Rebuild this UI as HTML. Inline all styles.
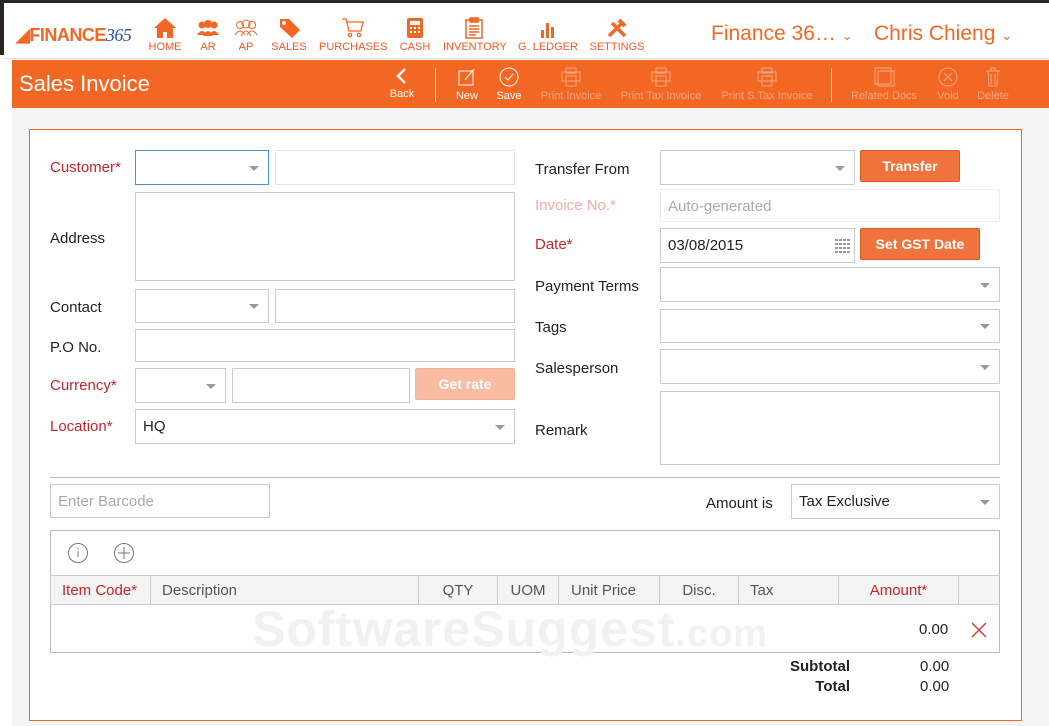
<!DOCTYPE html>
<html><head><meta charset="utf-8"><style>
*{box-sizing:border-box;margin:0;padding:0}
body{width:1049px;height:726px;overflow:hidden;position:relative;background:#fff;font-family:"Liberation Sans",Arial,sans-serif;font-size:15px;color:#222}
.a{position:absolute}
.top{left:0;top:0;width:1049px;height:3px;background:#2b2622}
.lstrip{left:0;top:0;width:4px;height:55px;background:#2b2622}
.hdr{left:4px;top:3px;width:1045px;height:56px;background:#fff;border-bottom:1px solid #ddd}
.nav{top:17px;text-align:center;color:#f05a28;font-size:11px}
.nav svg{display:block;margin:0 auto 2px}
.bar{left:12px;top:60px;width:1037px;height:48px;background:#f26724}
.bar .t{left:7px;top:11px;color:#fff;font-size:22px}
.tb{top:7px;color:#fff;font-size:11px;text-align:center}
.tb.d{color:#f9a882}
.tb svg{display:block;margin:0 auto 3px}
.vl{top:8px;width:1px;height:34px;background:#fff;opacity:.8}
.bg{left:12px;top:108px;width:1037px;height:618px;background:#f4f4f4}
.card{left:29px;top:129px;width:993px;height:592px;background:#fff;border:1px solid #f26724}
.lb{font-size:15px}
.r{color:#c0272d}
.in{border:1px solid #ccc;background:#fff}
.sel:after{content:"";position:absolute;right:9px;top:50%;margin-top:-2px;border-left:5px solid transparent;border-right:5px solid transparent;border-top:5px solid #999}
.btn{background:#f0733e;border:1px solid #d9582a;border-radius:2px;color:#fff;font-weight:bold;font-size:14px;text-align:center;line-height:30px}
.tx{padding-left:7px;line-height:33px}
.th{top:575px;height:30px;background:#f4f4f4;border-top:1px solid #ccc;border-bottom:1px solid #ccc;border-left:1px solid #ccc;font-size:15px;line-height:29px;color:#555}
.th.r{color:#c0272d}
</style></head><body>
<div class="a top"></div><div class="a lstrip"></div>
<div class="a hdr"></div>
<div class="a" style="left:16px;top:25px;font-size:18px;font-weight:bold;color:#f26724;letter-spacing:-.5px">◢FINANCE<span style="color:#2a4ea0;font-style:italic;font-weight:normal;font-family:'Liberation Serif',serif">365</span></div>
<div class="a nav" style="left:148px;width:34px"><svg width="24" height="22" viewBox="0 0 24 22"><path d="M12 1L1 11h3v10h6v-6h4v6h6V11h3z" fill="#f26724"/></svg>HOME</div>
<div class="a nav" style="left:195px;width:26px"><svg width="24" height="22" viewBox="0 0 24 22"><circle cx="6" cy="8" r="3.5" fill="#f26724"/><circle cx="12" cy="7" r="4" fill="#f26724"/><circle cx="18" cy="8" r="3.5" fill="#f26724"/><path d="M1 18q5-8 10 0zM7 19q5-10 10 0zM13 18q5-8 10 0z" fill="#f26724"/></svg>AR</div>
<div class="a nav" style="left:233px;width:26px"><svg width="24" height="22" viewBox="0 0 24 22" fill="none" stroke="#f26724"><circle cx="6" cy="8" r="3.5"/><circle cx="12" cy="7" r="4"/><circle cx="18" cy="8" r="3.5"/><path d="M1 18q5-8 10 0M7 19q5-10 10 0M13 18q5-8 10 0"/></svg>AP</div>
<div class="a nav" style="left:271px;width:36px"><svg width="26" height="22" viewBox="0 0 26 22"><path d="M4 2h9l11 11-8 8L4 10z" fill="#f26724"/><circle cx="8" cy="6" r="2" fill="#fff"/></svg>SALES</div>
<div class="a nav" style="left:319px;width:68px"><svg width="26" height="22" viewBox="0 0 26 22" fill="none" stroke="#f26724" stroke-width="1.3"><path d="M2 2h4l3 12h12l2-9H7"/><circle cx="10" cy="18" r="1.6"/><circle cx="19" cy="18" r="1.6"/></svg>PURCHASES</div>
<div class="a nav" style="left:398px;width:34px"><svg width="18" height="22" viewBox="0 0 18 22"><rect x="1" y="1" width="16" height="20" rx="2" fill="#f26724"/><rect x="4" y="4" width="10" height="4" fill="#fff"/><g fill="#fff"><rect x="4" y="10" width="2" height="2"/><rect x="8" y="10" width="2" height="2"/><rect x="12" y="10" width="2" height="2"/><rect x="4" y="14" width="2" height="2"/><rect x="8" y="14" width="2" height="2"/><rect x="12" y="14" width="2" height="2"/></g></svg>CASH</div>
<div class="a nav" style="left:443px;width:62px"><svg width="20" height="22" viewBox="0 0 20 22" fill="none" stroke="#f26724" stroke-width="1.5"><rect x="2" y="3" width="16" height="18"/><rect x="6" y="1" width="8" height="4" fill="#f26724"/><path d="M5 9h10M5 12h10M5 15h10M5 18h7"/></svg>INVENTORY</div>
<div class="a nav" style="left:517px;width:62px"><svg width="20" height="22" viewBox="0 0 20 22" fill="#f26724"><rect x="3" y="13" width="3" height="8"/><rect x="8" y="6" width="3" height="15"/><rect x="13" y="10" width="3" height="11"/></svg>G. LEDGER</div>
<div class="a nav" style="left:589px;width:56px"><svg width="24" height="22" viewBox="0 0 24 22" stroke="#f26724" stroke-width="3.5" fill="none"><path d="M4 19L17 6M20 19L7 6"/><path d="M14 3l6 6" stroke-width="4"/></svg>SETTINGS</div>
<div class="a" style="left:711px;top:22px;font-size:21px;color:#f26724">Finance 36… <span style="font-size:13px">⌄</span></div>
<div class="a" style="left:874px;top:22px;font-size:21px;color:#f26724">Chris Chieng <span style="font-size:13px">⌄</span></div>

<div class="a bar">
<div class="a t">Sales Invoice</div>
<div class="a tb" style="left:375px;width:30px"><svg width="14" height="18" viewBox="0 0 14 18"><path d="M10 2L3 9l7 7" stroke="#fff" stroke-width="2.5" fill="none"/></svg>Back</div>
<div class="a vl" style="left:423px"></div>
<div class="a tb" style="left:440px;width:30px"><svg width="20" height="20" viewBox="0 0 20 20" fill="none" stroke="#fff"><rect x="2" y="4" width="14" height="14"/><path d="M8 13l9-11"/></svg>New</div>
<div class="a tb" style="left:482px;width:30px"><svg width="20" height="20" viewBox="0 0 20 20" fill="none" stroke="#fff"><circle cx="10" cy="10" r="9"/><path d="M6 10l3 3 5-6"/></svg>Save</div>
<div class="a tb d" style="left:527px;width:64px"><svg width="22" height="20" viewBox="0 0 22 20" fill="none" stroke="#f9a882"><rect x="6" y="1" width="10" height="5"/><rect x="2" y="5" width="18" height="9"/><rect x="6" y="9" width="10" height="10"/></svg>Print Invoice</div>
<div class="a tb d" style="left:607px;width:84px"><svg width="22" height="20" viewBox="0 0 22 20" fill="none" stroke="#f9a882"><rect x="6" y="1" width="10" height="5"/><rect x="2" y="5" width="18" height="9"/><rect x="6" y="9" width="10" height="10"/></svg>Print Tax Invoice</div>
<div class="a tb d" style="left:707px;width:96px"><svg width="22" height="20" viewBox="0 0 22 20" fill="none" stroke="#f9a882"><rect x="6" y="1" width="10" height="5"/><rect x="2" y="5" width="18" height="9"/><rect x="6" y="9" width="10" height="10"/></svg>Print S.Tax Invoice</div>
<div class="a vl" style="left:819px"></div>
<div class="a tb d" style="left:837px;width:70px"><svg width="22" height="20" viewBox="0 0 22 20" fill="none" stroke="#f9a882"><rect x="2" y="1" width="16" height="16"/><rect x="5" y="4" width="16" height="15"/></svg>Related Docs</div>
<div class="a tb d" style="left:922px;width:28px"><svg width="20" height="20" viewBox="0 0 20 20" fill="none" stroke="#f9a882"><circle cx="10" cy="10" r="9"/><path d="M6 6l8 8M14 6l-8 8"/></svg>Void</div>
<div class="a tb d" style="left:965px;width:32px"><svg width="16" height="20" viewBox="0 0 16 20" fill="none" stroke="#f9a882"><path d="M1 4h14M6 4V1h4v3M3 4l1 15h8l1-15M6 7v10M10 7v10"/></svg>Delete</div>
</div>

<div class="a bg"></div>
<div class="a card"></div>

<div class="a lb r" style="left:50px;top:159px">Customer*</div>
<div class="a in sel" style="left:135px;top:150px;width:134px;height:35px;border-color:#4a90d9"></div>
<div class="a in" style="left:275px;top:150px;width:240px;height:35px;border-color:#e6e6e6"></div>
<div class="a lb" style="left:50px;top:230px">Address</div>
<div class="a in" style="left:135px;top:192px;width:380px;height:89px"></div>
<div class="a lb" style="left:50px;top:299px">Contact</div>
<div class="a in sel" style="left:135px;top:289px;width:134px;height:34px"></div>
<div class="a in" style="left:275px;top:289px;width:240px;height:34px"></div>
<div class="a lb" style="left:50px;top:339px">P.O No.</div>
<div class="a in" style="left:135px;top:329px;width:380px;height:33px"></div>
<div class="a lb r" style="left:50px;top:377px">Currency*</div>
<div class="a in sel" style="left:135px;top:368px;width:91px;height:35px"></div>
<div class="a in" style="left:232px;top:368px;width:178px;height:35px"></div>
<div class="a btn" style="left:415px;top:368px;width:100px;height:32px;background:#f8bca3;border-color:#f6b49a">Get rate</div>
<div class="a lb r" style="left:50px;top:418px">Location*</div>
<div class="a in sel tx" style="left:135px;top:409px;width:380px;height:35px">HQ</div>

<div class="a lb" style="left:535px;top:161px">Transfer From</div>
<div class="a in sel" style="left:660px;top:150px;width:195px;height:35px"></div>
<div class="a btn" style="left:860px;top:150px;width:100px;height:32px">Transfer</div>
<div class="a lb" style="left:535px;top:197px;color:#f4aaa8">Invoice No.*</div>
<div class="a in tx" style="left:660px;top:189px;width:340px;height:33px;border-color:#eee;color:#aaa">Auto-generated</div>
<div class="a lb r" style="left:535px;top:236px">Date*</div>
<div class="a in tx" style="left:660px;top:228px;width:195px;height:35px">03/08/2015<svg class="a" style="right:4px;top:10px" width="15" height="14" viewBox="0 0 15 14" fill="#999"><g><rect x="0" y="0" width="3" height="2"/><rect x="4" y="0" width="3" height="2"/><rect x="8" y="0" width="3" height="2"/><rect x="12" y="0" width="3" height="2"/><rect x="0" y="4" width="3" height="2"/><rect x="4" y="4" width="3" height="2"/><rect x="8" y="4" width="3" height="2"/><rect x="12" y="4" width="3" height="2"/><rect x="0" y="8" width="3" height="2"/><rect x="4" y="8" width="3" height="2"/><rect x="8" y="8" width="3" height="2"/><rect x="12" y="8" width="3" height="2"/><rect x="0" y="12" width="3" height="2"/><rect x="4" y="12" width="3" height="2"/><rect x="8" y="12" width="3" height="2"/><rect x="12" y="12" width="3" height="2"/></g></svg></div>
<div class="a btn" style="left:860px;top:228px;width:120px;height:32px">Set GST Date</div>
<div class="a lb" style="left:535px;top:278px">Payment Terms</div>
<div class="a in sel" style="left:660px;top:267px;width:340px;height:35px"></div>
<div class="a lb" style="left:535px;top:319px">Tags</div>
<div class="a in sel" style="left:660px;top:309px;width:340px;height:34px"></div>
<div class="a lb" style="left:535px;top:360px">Salesperson</div>
<div class="a in sel" style="left:660px;top:349px;width:340px;height:35px"></div>
<div class="a lb" style="left:535px;top:422px">Remark</div>
<div class="a in" style="left:660px;top:391px;width:340px;height:74px"></div>

<div class="a" style="left:50px;top:477px;width:950px;height:1px;background:#bbb"></div>
<div class="a in tx" style="left:50px;top:484px;width:220px;height:34px;color:#aaa">Enter Barcode</div>
<div class="a lb" style="left:706px;top:495px">Amount is</div>
<div class="a in sel tx" style="left:791px;top:484px;width:209px;height:35px">Tax Exclusive</div>

<div class="a" style="left:50px;top:530px;width:950px;height:123px;border:1px solid #bbb"></div>
<svg class="a" style="left:67px;top:542px" width="68" height="22" viewBox="0 0 68 22" fill="none" stroke="#777"><circle cx="11" cy="11" r="9.5"/><path d="M11 9v6M11 6v1.5"/><circle cx="57" cy="11" r="9.5"/><path d="M57 5v12M51 11h12"/></svg>
<div class="a th r" style="left:50px;width:100px;padding-left:11px">Item Code*</div>
<div class="a th" style="left:150px;width:268px;padding-left:11px">Description</div>
<div class="a th" style="left:418px;width:79px;text-align:center">QTY</div>
<div class="a th" style="left:497px;width:61px;text-align:center">UOM</div>
<div class="a th" style="left:558px;width:101px;padding-left:12px">Unit Price</div>
<div class="a th" style="left:659px;width:79px;text-align:center">Disc.</div>
<div class="a th" style="left:738px;width:100px;padding-left:11px">Tax</div>
<div class="a th r" style="left:838px;width:120px;text-align:center">Amount*</div>
<div class="a th" style="left:958px;width:42px;border-right:1px solid #bbb"></div>
<div class="a" style="left:252px;top:600px;font-size:50px;font-weight:bold;color:#f1f1f1;letter-spacing:1px">SoftwareSuggest<span style="font-size:38px">.com</span></div>
<div class="a" style="left:919px;top:621px">0.00</div>
<svg class="a" style="left:971px;top:622px" width="16" height="16" viewBox="0 0 16 16" stroke="#d9342b" stroke-width="1.4"><path d="M1 1l14 14M15 1L1 15"/></svg>
<div class="a" style="left:740px;top:658px;width:110px;text-align:right;font-weight:bold">Subtotal</div>
<div class="a" style="left:920px;top:658px">0.00</div>
<div class="a" style="left:740px;top:678px;width:110px;text-align:right;font-weight:bold">Total</div>
<div class="a" style="left:920px;top:678px">0.00</div>
</body></html>
